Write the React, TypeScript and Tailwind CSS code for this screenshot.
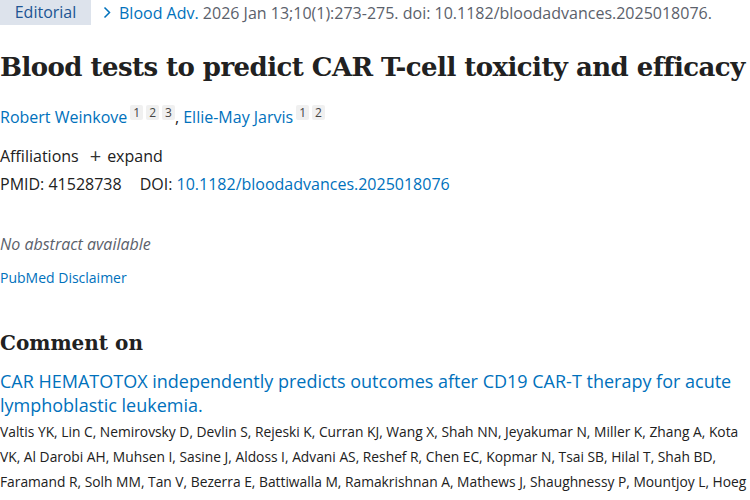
import React from "react";

const sans = "font-['Open_Sans',sans-serif]";
const serif = "font-['DejaVu_Serif',serif]";

function Sup({ n }: { n: string }) {
  return (
    <span className="ml-[3px] inline-block rounded-[2px] bg-[#f0f0f0] px-[3px] align-[6px] text-[12px] leading-[15px] text-[#444]">{n}</span>
  );
}

const commentAuthors =
  "Valtis YK, Lin C, Nemirovsky D, Devlin S, Rejeski K, Curran KJ, Wang X, Shah NN, Jeyakumar N, Miller K, Zhang A, Kota VK, Al Darobi AH, Muhsen I, Sasine J, Aldoss I, Advani AS, Reshef R, Chen EC, Kopmar N, Tsai SB, Hilal T, Shah BD, Faramand R, Solh MM, Tan V, Bezerra E, Battiwalla M, Ramakrishnan A, Mathews J, Shaughnessy P, Mountjoy L, Hoeg";

export default function App() {
  return (
    <div className={`h-[500px] w-[750px] overflow-hidden bg-white ${sans} text-[#212121]`}>
      <div className="flex items-center text-[16px]">
        <span className="w-[91px] bg-[#dde3ec] text-center leading-[25px] text-[#205493]">Editorial</span>
        <svg className="ml-[12px] mr-[8px]" width="8" height="13" viewBox="0 0 8 13" fill="none">
          <polyline points="1.5,1.5 6.5,6.5 1.5,11.5" stroke="#0071bc" strokeWidth="1.5" />
        </svg>
        <span className="text-[#5b616b]">
          <span className="text-[#0071bc]">Blood Adv.</span> 2026 Jan 13;10(1):273-275. doi: 10.1182/bloodadvances.2025018076.
        </span>
      </div>

      <h1 className={`${serif} mt-[24px] whitespace-nowrap text-[26px] font-bold leading-[36px] tracking-[-0.55px] text-[#212121]`}>
        Blood tests to predict CAR T-cell toxicity and efficacy
      </h1>

      <div className="mt-[20px] text-[16px] leading-[22px]">
        <span className="text-[#0071bc]">Robert Weinkove</span>
        <Sup n="1" />
        <Sup n="2" />
        <Sup n="3" />
        <span>, </span>
        <span className="text-[#0071bc]">Ellie-May Jarvis</span>
        <Sup n="1" />
        <Sup n="2" />
      </div>

      <div className="mt-[17px] flex items-center text-[16px] leading-[22px]">
        <span>Affiliations</span>
        <span className="ml-[11px] text-[20px] leading-none text-[#333]">+</span>
        <span className="ml-[6px]">expand</span>
      </div>
      <div className="mt-[6px] text-[16px] leading-[22px]">
        PMID: 41528738<span className="ml-[18px]">DOI: </span>
        <span className="text-[#0071bc]">10.1182/bloodadvances.2025018076</span>
      </div>

      <div className="mt-[38px] text-[16px] italic leading-[22px] text-[#5b616b]">No abstract available</div>
      <div className="mt-[13px] text-[14px] leading-[20px] text-[#0071bc]">PubMed Disclaimer</div>

      <h2 className={`${serif} mt-[42px] text-[20px] font-bold leading-[26px]`}>Comment on</h2>
      <div className="mt-[13px] text-[18px] leading-[24px] text-[#0071bc]">
        CAR HEMATOTOX independently predicts outcomes after CD19 CAR-T therapy for acute lymphoblastic leukemia.
      </div>
      <div className="mt-[2px] text-[13.8px] leading-[25px] text-[#212121]">{commentAuthors}</div>
    </div>
  );
}
